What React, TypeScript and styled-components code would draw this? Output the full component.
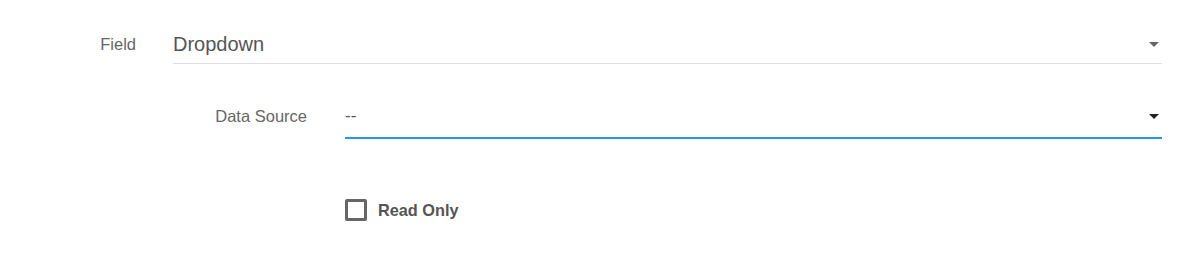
import { createGlobalStyle, styled } from "styled-components";

const GlobalStyle = createGlobalStyle`
  body {
    margin: 0;
    background: #ffffff;
    font-family: "Liberation Sans", Arial, sans-serif;
  }
`;

const Form = styled.div`
  padding: 25px 19px 0 0;
  width: 1181px;
  box-sizing: border-box;
`;

const Row = styled.div<{ $labelWidth: number; $indent: number; $top?: number }>`
  display: grid;
  grid-template-columns: ${(p) => p.$labelWidth}px 1fr;
  column-gap: 37px;
  align-items: start;
  padding-left: ${(p) => p.$indent}px;
  margin-top: ${(p) => p.$top ?? 0}px;
`;

const Label = styled.label`
  display: flex;
  align-items: center;
  justify-content: flex-end;
  height: 38px;
  font-size: 16.5px;
  color: #666666;
`;

const Select = styled.div<{ $focused?: boolean; $big?: boolean }>`
  display: flex;
  align-items: center;
  height: 38px;
  padding-bottom: ${(p) => (p.$focused ? 2 : 0)}px;
  border-bottom: ${(p) => (p.$focused ? "2.5px solid #2196f3" : "1px solid #dddddd")};
  font-size: ${(p) => (p.$big ? 20 : 17)}px;
  color: #555555;
  cursor: pointer;
`;

const Value = styled.span`
  flex: 1;
`;

const Caret = styled.span<{ $dark?: boolean }>`
  width: 0;
  height: 0;
  margin-right: 3px;
  border-left: 5px solid transparent;
  border-right: 5px solid transparent;
  border-top: 5px solid ${(p) => (p.$dark ? "#222222" : "#666666")};
`;

const CheckRow = styled.label`
  display: flex;
  align-items: center;
  gap: 11px;
  margin: 60px 0 0 345px;
  font-size: 16.3px;
  font-weight: bold;
  color: #555555;
  cursor: pointer;
`;

const Box = styled.span`
  width: 22px;
  height: 22px;
  box-sizing: border-box;
  border: 3px solid #666666;
  border-radius: 2px;
`;

export default function App() {
  return (
    <>
      <GlobalStyle />
      <Form>
        <Row $labelWidth={136} $indent={0}>
          <Label>Field</Label>
          <Select $big>
            <Value>Dropdown</Value>
            <Caret />
          </Select>
        </Row>
        <Row $labelWidth={134} $indent={173} $top={33} style={{ columnGap: 38 }}>
          <Label>Data Source</Label>
          <Select $focused>
            <Value>--</Value>
            <Caret $dark />
          </Select>
        </Row>
        <CheckRow>
          <Box />
          Read Only
        </CheckRow>
      </Form>
    </>
  );
}
